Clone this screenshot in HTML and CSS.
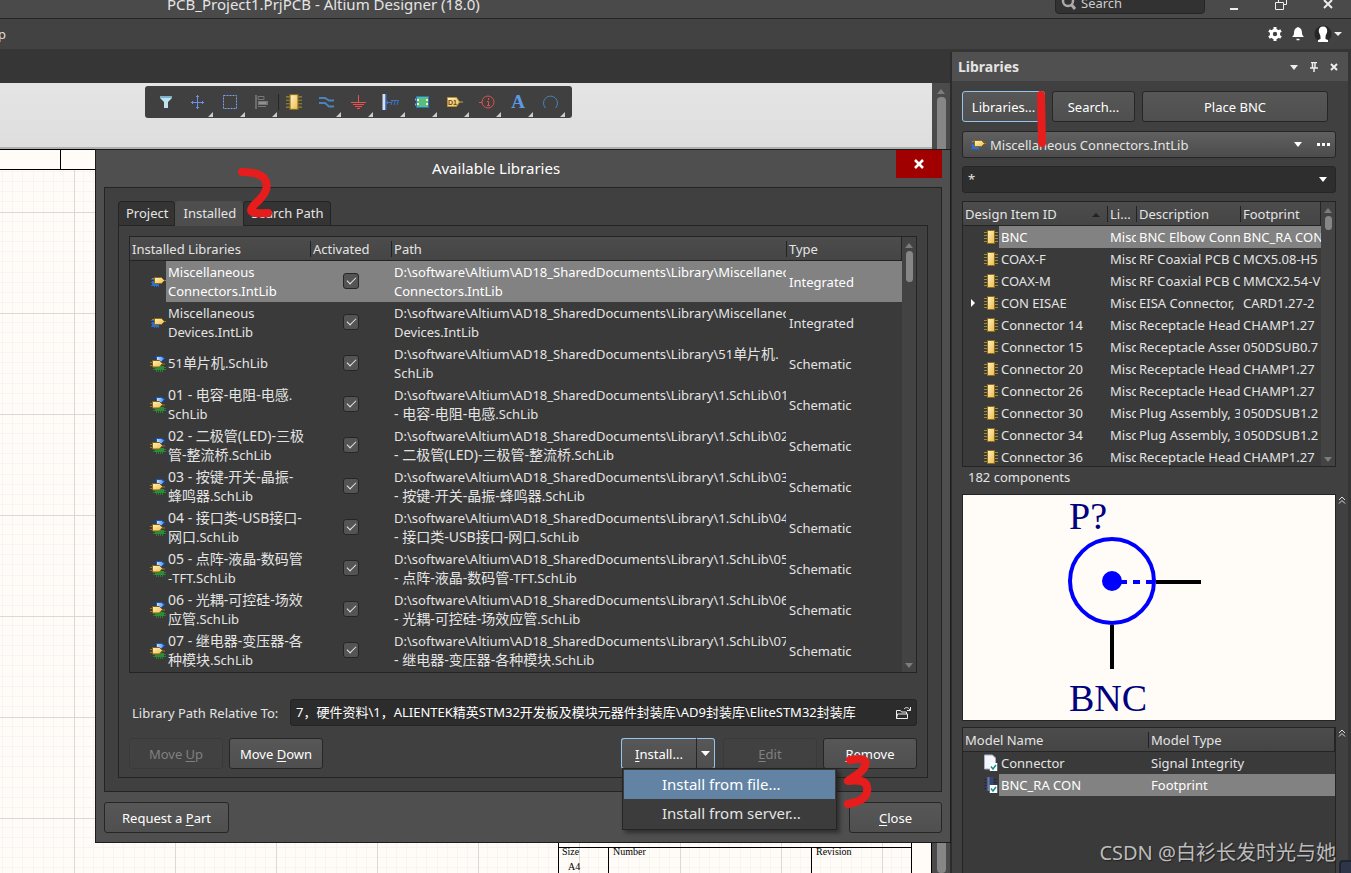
FILE: index.html
```
<!DOCTYPE html>
<html lang="en">
<head>
    <meta charset="UTF-8">
    <meta name="viewport" content="width=device-width, initial-scale=1.0">
    <title>PCB_Project1.PrjPCB - Altium Designer (18.0)</title>
    <link rel="stylesheet" href="styles.css">
</head>
<body>
    <svg class="defs" aria-hidden="true">
        <linearGradient id="gold" x1="0" y1="0" x2="1" y2="1">
            <stop offset="0" stop-color="#fff3c4"/><stop offset="1" stop-color="#eebb4c"/>
        </linearGradient>
        <linearGradient id="sky" x1="0" y1="0" x2="1" y2="0">
            <stop offset="0" stop-color="#cfe4ff"/><stop offset="1" stop-color="#3d86ea"/>
        </linearGradient>
        <symbol id="chip" viewBox="0 0 14 14">
            <path d="M0 2.500h14M0 5.500h14M0 8.500h14M0 11.500h14" stroke="#a08a35"/>
            <rect x="3.500" y=".5" width="7" height="13" fill="url(#gold)" stroke="#8c6d1c"/>
        </symbol>
        <symbol id="intlib" viewBox="0 0 16 12">
            <path d="M1 3.500h5M1 6.500h5M1 9.500h6M4.500 5v6M6.500 5v6M8.500 5v6" stroke="#2c62c0"/>
            <rect x="2" y="5" width="7" height="5" fill="#2f6cd0"/>
            <path d="M2 2.500h3M14 4.500h2" stroke="#a8811c"/>
            <path d="M4.500 1.500h7l3 3-3 3h-7z" fill="url(#gold)" stroke="#8c6a14"/>
        </symbol>
        <symbol id="schlib" viewBox="0 0 16 18">
            <path d="M2 2.500h13M3 5.500h13" stroke="#123f9a"/>
            <path d="M6.500 1.500h5l3 2-3 3h-5z" fill="url(#sky)" stroke="#1d57b4"/>
            <path d="M3 12.500h13M3 14.500h13M6.500 11v6M8.500 11v6M10.500 11v6M12.500 11v6" stroke="#2f7d35"/>
            <rect x="5" y="11" width="9" height="4" fill="#2c8c38"/>
            <path d="M0 7.500h4M0 10.500h4M12 9h3" stroke="#9a7615"/>
            <path d="M2.500 5.500h7l3 3-3 3.500h-7z" fill="url(#gold)" stroke="#80600e"/>
        </symbol>
        <symbol id="collapse" viewBox="0 0 8 8">
            <path d="M1 4l3-3 3 3M1 7.500l3-3 3 3" fill="none" stroke="#ddd"/>
        </symbol>
        <symbol id="ticked" viewBox="0 0 8 8">
            <path fill="#fff" d="M0 0h8v8H0z"/>
            <path d="M1.500 3.500l2 2.500 3-4" fill="none" stroke="#11908d" stroke-width="1.500"/>
        </symbol>
    </svg>

    <header class="titlebar">
        <span class="app-title">PCB_Project1.PrjPCB - Altium Designer (18.0)</span>
        <label class="app-search">
            <svg width="16" height="16" viewBox="0 0 16 16"><circle cx="7" cy="6" r="5" fill="none" stroke="#aaa" stroke-width="2.500"/><path d="M10 9l4 5" stroke="#aaa" stroke-width="3"/></svg>
            <input type="text" placeholder="Search" aria-label="Search">
        </label>
        <div class="window-buttons">
            <button aria-label="Minimize"><svg width="14" height="14" viewBox="0 0 14 14"><path d="M3 12h8" stroke="#eee" stroke-width="2"/></svg></button>
            <button aria-label="Restore"><svg width="14" height="14" viewBox="0 0 14 14"><path d="M1.500 5.500h8v7h-8zM4.500 5V2.500h8v5H10" fill="none" stroke="#eee"/></svg></button>
            <button aria-label="Close window"><svg width="14" height="14" viewBox="0 0 14 14"><path d="M3 3l8 8M11 3l-8 8" stroke="#eee" stroke-width="2"/></svg></button>
        </div>
    </header>

    <nav class="menubar">
        <a class="menu-help" href="#">Help</a>
        <div class="account">
            <svg width="14" height="14" viewBox="0 0 14 14"><circle cx="7" cy="7" r="3.700" fill="none" stroke="#fff" stroke-width="3"/><path d="M7 0v3M7 11v3M1 3.500l2.500 1.500M13 3.500L10.500 5M1 10.500L3.500 9M13 10.500L10.500 9" stroke="#fff" stroke-width="3"/></svg>
            <svg width="12" height="14" viewBox="0 0 12 14"><path d="M6 0c3 1 4 3 4 6 0 2 1 3 2 4H0c1-1 2-2 2-4 0-3 1-5 4-6z" fill="#fff"/><path d="M4.500 12.500h3" stroke="#fff" stroke-width="1.500"/></svg>
            <svg width="28" height="18" viewBox="0 0 28 18"><circle cx="9" cy="9" r="8.500" fill="#262626"/><path d="M9 1.500c3 0 4.500 2 4.200 5-.3 2-1.700 3.500-1.700 5.500v2l2.500 1v2H4v-2l2.500-1v-2c0-2-1.400-3.500-1.700-5.500-.3-3 1.200-5 4.200-5z" fill="#fff"/><path d="M20 7h8l-4 4z" fill="#eee"/></svg>
        </div>
    </nav>

    <div class="workspace">
        <main class="editor">
            <div class="doc-tabs"></div>
            <div class="doc">
                <div class="doc-view">
                    <div class="desk"></div>
                    <svg class="sheet">
                        <defs>
                            <pattern id="grid" x="73" y="62" width="101" height="101" patternUnits="userSpaceOnUse">
                                <path d="M10.500 0v101M20.500 0v101M30.500 0v101M40.500 0v101M50.500 0v101M61.500 0v101M71.500 0v101M81.500 0v101M91.500 0v101M0 10.500h101M0 20.500h101M0 30.500h101M0 40.500h101M0 50.500h101M0 61.500h101M0 71.500h101M0 81.500h101M0 91.500h101" stroke="#f6f5f1"/>
                                <path d="M1.500 0v101M0 1.500h101" stroke="#d9dad5"/>
                            </pattern>
                        </defs>
                        <rect width="100%" height="100%" fill="#fffcf7"/>
                        <rect y="20" width="911" height="100%" fill="url(#grid)"/>
                        <path d="M0 .5h932M60.500 0v20M0 20.500h911M911.500 20v900M931.500 0v900" stroke="#000"/>
                        <path d="M558.500 680v200M558 698.500h353M608.500 698v200M811.500 698v200" stroke="#000"/>
                        <text x="562" y="706">Size</text>
                        <text x="568" y="721">A4</text>
                        <text x="613" y="706">Number</text>
                        <text x="816" y="706">Revision</text>
                    </svg>
                </div>
                <div class="scrollbar doc-scroll"><i class="up"></i><i class="thumb"></i></div>
            </div>
            <div class="toolbar">
                <button aria-label="Filter"><svg width="16" height="16" viewBox="0 0 16 16"><path d="M2 2h12v2l-4 4v6H6V8L2 4z" fill="#bfe3ee"/><path d="M2 2h12v2H2z" fill="#78b4cc"/></svg></button>
                <button class="more" aria-label="Move"><svg width="16" height="16" viewBox="0 0 16 16"><path d="M7.500 1v14M1 8.500h13M6 2.500h3M6 13.500h3M2.500 7v3M12.500 7v3" stroke="#6a8fe6" fill="none"/></svg></button>
                <button class="more" aria-label="Select"><svg width="16" height="16" viewBox="0 0 16 16"><rect x="1.500" y="1.500" width="13" height="13" fill="none" stroke="#7ba0f5" stroke-dasharray="2 1"/></svg></button>
                <button class="more" aria-label="Align"><svg width="16" height="16" viewBox="0 0 16 16"><path d="M2 1v14" stroke="#6c6c6c" stroke-width="2"/><path d="M4 2.500h6v3H4zM4 12.500h8" stroke="#777" fill="none"/><path d="M4 7h10v4H4z" fill="#777"/><path d="M5 9h7" stroke="#aaa"/></svg></button>
                <button class="split" aria-label="Part"><svg width="16" height="16"><use href="#chip"/></svg></button>
                <button class="more" aria-label="Wire"><svg width="18" height="16" viewBox="0 0 18 16"><path d="M2 4h6l4 2.500h5M2 9h6l4 3.500h5" fill="none" stroke="#4a83bd" stroke-width="2"/></svg></button>
                <button class="more" aria-label="Power port"><svg width="16" height="16" viewBox="0 0 16 16"><path d="M8.500 1v8M1 8.500h15M3 10.500h11M5 12.500h7M7 14.500h3" stroke="#f0504c"/></svg></button>
                <button class="more" aria-label="Bus"><svg width="18" height="16" viewBox="0 0 18 16"><path d="M3 0v16" stroke="#cfe0ff" stroke-width="3"/><path d="M5 0v16M5 8.500h5M6.500 7v3" stroke="#3c72cc"/><path d="M10 11l1.500-5M13 11l1.500-5M16 11l1.500-5M10 6.500h8" stroke="#3c72cc"/></svg></button>
                <button class="more" aria-label="Sheet symbol"><svg width="16" height="16" viewBox="0 0 16 16"><path d="M1 5.500h14M1 10.500h14" stroke="#7ca8ff" stroke-width="2"/><rect x="2.500" y="2.500" width="12" height="11" fill="#58bd80" stroke="#2c70ca"/><path d="M3 5h2v2H3zM12 5h2v2h-2zM3 9h2v2H3zM12 9h2v2h-2z" fill="#fff39a"/></svg></button>
                <button class="more" aria-label="Net label"><svg width="18" height="16" viewBox="0 0 18 16"><path d="M2.500 3.500h9l3 4.500-3 4.500h-9z" fill="url(#gold)" stroke="#b8903a"/><path d="M14 8h4" stroke="#c9a24a"/><text class="tag-text" x="3" y="11">D1</text></svg></button>
                <button class="more" aria-label="No ERC"><svg width="18" height="16" viewBox="0 0 18 16"><circle cx="11" cy="8" r="6" fill="none" stroke="#e0504e"/><path d="M2 8.500h3M11.500 4v2M10 7.500h1.500V11M10 11.500h3" fill="none" stroke="#e0504e"/></svg></button>
                <button class="more letter" aria-label="Text">A</button>
                <button class="more" aria-label="Arc"><svg width="16" height="16" viewBox="0 0 16 16"><path d="M3.500 14A7 7 0 1 1 13.500 14" fill="none" stroke="#4682b8"/></svg></button>
            </div>
        </main>

        <aside class="panel">
            <div class="panel-head">
                <h2>Libraries</h2>
                <button aria-label="Panel menu"><svg width="8" height="8" viewBox="0 0 8 8"><path d="M0 2h8L4 7z" fill="#eee"/></svg></button>
                <button aria-label="Pin"><svg width="8" height="10" viewBox="0 0 8 10"><path d="M1 .5h6M2.500 1v5M5 1v5M0 6h8M4 6v4" stroke="#eee" stroke-width="1.500"/></svg></button>
                <button aria-label="Close panel"><svg width="8" height="8" viewBox="0 0 8 8"><path d="M1 1l6 6M7 1L1 7" stroke="#eee" stroke-width="2"/></svg></button>
            </div>
            <div class="panel-body">
                <div class="panel-buttons">
                    <button class="btn focused">Libraries...</button>
                    <button class="btn">Search...</button>
                    <button class="btn">Place BNC</button>
                </div>
                <div class="combo combo-lib">
                    <svg width="16" height="12"><use href="#intlib"/></svg>
                    <select aria-label="Library"><option>Miscellaneous Connectors.IntLib</option></select>
                    <svg width="8" height="5" viewBox="0 0 8 5"><path d="M0 0h8L4 5z" fill="#fff"/></svg>
                    <button aria-label="More options"><svg width="14" height="4" viewBox="0 0 14 4"><path d="M1 0h3v3H1zM6 0h3v3H6zM11 0h3v3h-3z" fill="#fff"/></svg></button>
                </div>
                <div class="combo combo-filter">
                    <input type="text" value="*" aria-label="Filter components">
                    <button aria-label="Filter history"><svg width="8" height="5" viewBox="0 0 8 5"><path d="M0 0h8L4 5z" fill="#fff"/></svg></button>
                </div>
                <div class="grid components">
                    <table>
                        <colgroup><col class="c-icon"><col class="c-id"><col class="c-lib"><col class="c-desc"><col></colgroup>
                        <thead>
                            <tr><th colspan="2"><span class="sorted">Design Item ID</span></th><th>Li...</th><th>Description</th><th>Footprint</th></tr>
                        </thead>
                        <tbody>
                            <tr class="selected"><td><svg class="chip"><use href="#chip"/></svg></td><td>BNC</td><td>Misc</td><td>BNC Elbow Conn</td><td>BNC_RA CON</td></tr>
                            <tr><td><svg class="chip"><use href="#chip"/></svg></td><td>COAX-F</td><td>Misc</td><td>RF Coaxial PCB C</td><td>MCX5.08-H5</td></tr>
                            <tr><td><svg class="chip"><use href="#chip"/></svg></td><td>COAX-M</td><td>Misc</td><td>RF Coaxial PCB C</td><td>MMCX2.54-V</td></tr>
                            <tr><td class="expand"><svg class="chip"><use href="#chip"/></svg></td><td>CON EISAE</td><td>Misc</td><td>EISA Connector,</td><td>CARD1.27-2</td></tr>
                            <tr><td><svg class="chip"><use href="#chip"/></svg></td><td>Connector 14</td><td>Misc</td><td>Receptacle Head</td><td>CHAMP1.27</td></tr>
                            <tr><td><svg class="chip"><use href="#chip"/></svg></td><td>Connector 15</td><td>Misc</td><td>Receptacle Assem</td><td>050DSUB0.7</td></tr>
                            <tr><td><svg class="chip"><use href="#chip"/></svg></td><td>Connector 20</td><td>Misc</td><td>Receptacle Head</td><td>CHAMP1.27</td></tr>
                            <tr><td><svg class="chip"><use href="#chip"/></svg></td><td>Connector 26</td><td>Misc</td><td>Receptacle Head</td><td>CHAMP1.27</td></tr>
                            <tr><td><svg class="chip"><use href="#chip"/></svg></td><td>Connector 30</td><td>Misc</td><td>Plug Assembly, 3</td><td>050DSUB1.2</td></tr>
                            <tr><td><svg class="chip"><use href="#chip"/></svg></td><td>Connector 34</td><td>Misc</td><td>Plug Assembly, 3</td><td>050DSUB1.2</td></tr>
                            <tr><td><svg class="chip"><use href="#chip"/></svg></td><td>Connector 36</td><td>Misc</td><td>Receptacle Head</td><td>CHAMP1.27</td></tr>
                        </tbody>
                    </table>
                    <div class="scrollbar"><i class="up"></i><i class="thumb short"></i><i class="down"></i></div>
                </div>
                <p class="count">182 components</p>
                <div class="with-collapse">
                    <div class="preview">
                        <svg width="240" height="224" viewBox="0 0 240 224">
                            <text x="106" y="34">P?</text>
                            <circle cx="149" cy="86" r="42" fill="none" stroke="#00f" stroke-width="4"/>
                            <circle cx="149" cy="86" r="10" fill="#00f"/>
                            <path d="M158 87h6M170 87h7M183 87h8" stroke="#00f" stroke-width="4"/>
                            <path d="M193 87h45M149 130v44" stroke="#000" stroke-width="4"/>
                            <text x="106" y="216">BNC</text>
                        </svg>
                    </div>
                    <svg class="collapse"><use href="#collapse"/></svg>
                </div>
                <div class="with-collapse fill">
                    <div class="grid models">
                        <table>
                            <colgroup><col class="c-icon"><col class="c-model"><col></colgroup>
                            <thead><tr><th colspan="2">Model Name</th><th>Model Type</th></tr></thead>
                            <tbody>
                                <tr><td><svg class="model-icon" viewBox="0 0 14 18"><path d="M1 1h8l3 3v11H1z" fill="#f3f5ff" stroke="#a9aec8"/><use href="#ticked" x="6" y="9" width="8" height="8"/></svg></td><td>Connector</td><td>Signal Integrity</td></tr>
                                <tr class="selected"><td><svg class="model-icon" viewBox="0 0 14 18"><path d="M1 3.500h12M1 6.500h12M1 9.500h12M1 12.500h12" stroke="#22283c"/><path d="M3 1h7v14H3z" fill="#37446f"/><path d="M4 1h2v14H4z" fill="#6878a8"/><use href="#ticked" x="6" y="9" width="8" height="8"/></svg></td><td>BNC_RA CON</td><td>Footprint</td></tr>
                            </tbody>
                        </table>
                    </div>
                    <svg class="collapse"><use href="#collapse"/></svg>
                </div>
            </div>
        </aside>
    </div>

    <section class="dialog" role="dialog" aria-labelledby="dialogTitle">
        <div class="dialog-head">
            <h1 id="dialogTitle">Available Libraries</h1>
            <button class="dialog-close" aria-label="Close dialog"><svg width="10" height="10" viewBox="0 0 10 10"><path d="M1 1l8 8M9 1L1 9" stroke="#fff" stroke-width="2.500"/></svg></button>
        </div>
        <div class="dialog-box">
            <div class="tabs">
                <button class="tab">Project</button>
                <button class="tab active">Installed</button>
                <button class="tab">Search Path</button>
            </div>
            <div class="tab-page">
                <div class="grid installed">
                    <table>
                        <colgroup><col class="c-icon"><col class="c-name"><col class="c-active"><col class="c-path"><col></colgroup>
                        <thead>
                            <tr><th colspan="2">Installed Libraries</th><th>Activated</th><th>Path</th><th>Type</th></tr>
                        </thead>
                        <tbody>
                            <tr class="selected">
                                <td><svg class="int"><use href="#intlib"/></svg></td>
                                <td>Miscellaneous<br>Connectors.IntLib</td>
                                <td><input type="checkbox" checked aria-label="Activated"></td>
                                <td>D:\software\Altium\AD18_SharedDocuments\Library\Miscellaneo<br>Connectors.IntLib</td>
                                <td>Integrated</td>
                            </tr>
                            <tr>
                                <td><svg class="int"><use href="#intlib"/></svg></td>
                                <td>Miscellaneous<br>Devices.IntLib</td>
                                <td><input type="checkbox" checked aria-label="Activated"></td>
                                <td>D:\software\Altium\AD18_SharedDocuments\Library\Miscellaneo<br>Devices.IntLib</td>
                                <td>Integrated</td>
                            </tr>
                            <tr>
                                <td><svg class="sch"><use href="#schlib"/></svg></td>
                                <td>51<span class="zh">单片机</span>.SchLib</td>
                                <td><input type="checkbox" checked aria-label="Activated"></td>
                                <td>D:\software\Altium\AD18_SharedDocuments\Library\51<span class="zh">单片机</span>.<br>SchLib</td>
                                <td>Schematic</td>
                            </tr>
                            <tr>
                                <td><svg class="sch"><use href="#schlib"/></svg></td>
                                <td><span class="zh">01 - 电容-电阻-电感</span>.<br>SchLib</td>
                                <td><input type="checkbox" checked aria-label="Activated"></td>
                                <td>D:\software\Altium\AD18_SharedDocuments\Library\1.SchLib\01<br><span class="zh">- 电容-电阻-电感</span>.SchLib</td>
                                <td>Schematic</td>
                            </tr>
                            <tr>
                                <td><svg class="sch"><use href="#schlib"/></svg></td>
                                <td><span class="zh">02 - 二极管(LED)-三极<br>管-整流桥</span>.SchLib</td>
                                <td><input type="checkbox" checked aria-label="Activated"></td>
                                <td>D:\software\Altium\AD18_SharedDocuments\Library\1.SchLib\02<br><span class="zh">- 二极管(LED)-三极管-整流桥</span>.SchLib</td>
                                <td>Schematic</td>
                            </tr>
                            <tr>
                                <td><svg class="sch"><use href="#schlib"/></svg></td>
                                <td><span class="zh">03 - 按键-开关-晶振-<br>蜂鸣器</span>.SchLib</td>
                                <td><input type="checkbox" checked aria-label="Activated"></td>
                                <td>D:\software\Altium\AD18_SharedDocuments\Library\1.SchLib\03<br><span class="zh">- 按键-开关-晶振-蜂鸣器</span>.SchLib</td>
                                <td>Schematic</td>
                            </tr>
                            <tr>
                                <td><svg class="sch"><use href="#schlib"/></svg></td>
                                <td><span class="zh">04 - 接口类-USB接口-<br>网口</span>.SchLib</td>
                                <td><input type="checkbox" checked aria-label="Activated"></td>
                                <td>D:\software\Altium\AD18_SharedDocuments\Library\1.SchLib\04<br><span class="zh">- 接口类-USB接口-网口</span>.SchLib</td>
                                <td>Schematic</td>
                            </tr>
                            <tr>
                                <td><svg class="sch"><use href="#schlib"/></svg></td>
                                <td><span class="zh">05 - 点阵-液晶-数码管</span><br>-TFT.SchLib</td>
                                <td><input type="checkbox" checked aria-label="Activated"></td>
                                <td>D:\software\Altium\AD18_SharedDocuments\Library\1.SchLib\05<br><span class="zh">- 点阵-液晶-数码管</span>-TFT.SchLib</td>
                                <td>Schematic</td>
                            </tr>
                            <tr>
                                <td><svg class="sch"><use href="#schlib"/></svg></td>
                                <td><span class="zh">06 - 光耦-可控硅-场效<br>应管</span>.SchLib</td>
                                <td><input type="checkbox" checked aria-label="Activated"></td>
                                <td>D:\software\Altium\AD18_SharedDocuments\Library\1.SchLib\06<br><span class="zh">- 光耦-可控硅-场效应管</span>.SchLib</td>
                                <td>Schematic</td>
                            </tr>
                            <tr>
                                <td><svg class="sch"><use href="#schlib"/></svg></td>
                                <td><span class="zh">07 - 继电器-变压器-各<br>种模块</span>.SchLib</td>
                                <td><input type="checkbox" checked aria-label="Activated"></td>
                                <td>D:\software\Altium\AD18_SharedDocuments\Library\1.SchLib\07<br><span class="zh">- 继电器-变压器-各种模块</span>.SchLib</td>
                                <td>Schematic</td>
                            </tr>
                        </tbody>
                    </table>
                    <div class="scrollbar"><i class="up"></i><i class="thumb long"></i><i class="down"></i></div>
                </div>
                <div class="path-row">
                    <label for="libPath">Library Path Relative To:</label>
                    <div class="path-field">
                        <input type="text" id="libPath" value="7，硬件资料\1，ALIENTEK精英STM32开发板及模块元器件封装库\AD9封装库\EliteSTM32封装库">
                        <button aria-label="Browse"><svg width="18" height="14" viewBox="0 0 18 14"><path d="M1.500 12.500v-8h4l1 1.500h5v2M1.500 12.500l1-4.500h10v4.500zM9 3c2-2 4-2 6 1M15.500 1v3.500H12" fill="none" stroke="#eee"/></svg></button>
                    </div>
                </div>
                <div class="button-row">
                    <button class="btn" disabled>Move <u>U</u>p</button>
                    <button class="btn">Move <u>D</u>own</button>
                    <div class="install">
                        <button class="btn focused"><u>I</u>nstall...</button>
                        <button class="btn focused drop" aria-label="Install options"><svg width="9" height="5" viewBox="0 0 9 5"><path d="M0 0h9L4.500 5z" fill="#fff"/></svg></button>
                        <div class="install-menu">
                            <button class="hover">Install from file...</button>
                            <button>Install from server...</button>
                        </div>
                    </div>
                    <button class="btn" disabled><u>E</u>dit</button>
                    <button class="btn"><u>R</u>emove</button>
                </div>
            </div>
        </div>
        <div class="dialog-foot">
            <button class="btn request">Request a <u>P</u>art</button>
            <button class="btn"><u>C</u>lose</button>
        </div>
    </section>

    <svg class="marks" aria-hidden="true">
        <path d="M1041 95L1042 143"/>
        <path d="M242 172C252 172 259 173 264 178C271 188 263 197 254 205C248 212 251 214 268 213"/>
        <path d="M850 760C860 758 868 758 865 766C862 774 850 778 848 781C858 780 866 780 867 787C869 797 860 802 848 804"/>
    </svg>
    <div class="watermark">CSDN @白衫长发时光与她</div>
    <div class="corner"></div>
</body>
</html>
```
FILE: styles.css
```
* {
    box-sizing: border-box;
}
body {
    margin: 0;
    height: 100vh;
    overflow: hidden;
    display: flex;
    flex-direction: column;
    position: relative;
    background: #353535;
    color: #e4e4e4;
    font-family: "Noto Sans", "Noto Sans CJK SC", sans-serif;
    font-size: 13px;
    line-height: 19px;
}
button, input, select {
    font: inherit;
    color: inherit;
    margin: 0;
    padding: 0;
    border: none;
    background: none;
    outline: none;
}
svg {
    display: block;
    flex: none;
}
.defs {
    position: absolute;
    width: 0;
    height: 0;
}
.zh {
    font-size: 14px;
    line-height: 18px;
}

/* window bars */
.titlebar {
    display: flex;
    align-items: flex-end;
    height: 19px;
    flex: none;
    overflow: hidden;
    background: #4a4a4a;
    border-bottom: 1px solid #262626;
}
.app-title {
    padding-left: 167px;
    padding-bottom: 4px;
    flex: 1;
    font-size: 15px;
}
.app-search {
    display: flex;
    align-items: center;
    gap: 4px;
    width: 150px;
    height: 22px;
    margin-bottom: 4px;
    padding: 0 5px;
    background: #323232;
    border: 1px solid #262626;
    border-radius: 4px;
}
.app-search input {
    width: 100%;
}
.app-search input::placeholder {
    color: #ccc;
}
.window-buttons {
    display: flex;
    gap: 33px;
    padding: 0 16px 7px 22px;
}
.menubar {
    display: flex;
    justify-content: space-between;
    align-items: center;
    height: 30px;
    flex: none;
    background: #424242;
}
.menu-help {
    width: 6px;
    display: flex;
    justify-content: flex-end;
    overflow: hidden;
    color: #ddd;
    text-decoration: none;
}
.account {
    display: flex;
    align-items: center;
    gap: 10px;
    padding-right: 9px;
}
.workspace {
    display: flex;
    flex: 1;
    min-height: 0;
}

/* schematic editor */
.editor {
    flex: 1;
    display: flex;
    flex-direction: column;
    position: relative;
    min-width: 0;
}
.doc-tabs {
    height: 34px;
    flex: none;
    background: #363636;
}
.doc {
    flex: 1;
    display: flex;
    min-height: 0;
}
.doc-view {
    flex: 1;
    display: flex;
    flex-direction: column;
    min-width: 0;
}
.desk {
    height: 66px;
    flex: none;
    background: linear-gradient(#e5e5e5, #dedede);
    border-bottom: 2px solid #b0b0b0;
}
.sheet {
    width: 100%;
    flex: 1;
    min-height: 0;
    font: 10px "Liberation Serif", serif;
}
.toolbar {
    position: absolute;
    left: 145px;
    top: 37px;
    display: flex;
    padding: 0 6px 0 5px;
    background: #404040;
    border-radius: 3px;
}
.toolbar button {
    width: 32px;
    height: 32px;
    display: flex;
    align-items: center;
    justify-content: center;
    position: relative;
}
.toolbar .more::after {
    content: "";
    position: absolute;
    right: 1px;
    bottom: 1px;
    border: solid transparent;
    border-width: 0 0 5px 5px;
    border-bottom-color: #ccc;
}
.toolbar .split {
    background: linear-gradient(#262626, #262626) no-repeat 0 8px / 1px 16px;
}
.toolbar .letter {
    font: bold 19px "Liberation Serif", serif;
    color: #5a9ae6;
}
.tag-text {
    font: bold 7px "Liberation Sans", sans-serif;
    fill: #6b4a08;
}

/* scrollbars */
.scrollbar {
    display: flex;
    flex-direction: column;
    align-items: center;
    width: 14px;
    flex: none;
    padding: 6px 0 4px;
    gap: 3px;
    background: #434343;
}
.scrollbar .up {
    border: 4px solid transparent;
    border-top: 0;
    border-bottom: 5px solid #7c7c7c;
}
.scrollbar .down {
    margin-top: auto;
    border: 4px solid transparent;
    border-bottom: 0;
    border-top: 5px solid #7c7c7c;
}
.thumb {
    width: 7px;
    flex: 1;
    background: #868686;
    border-radius: 4px;
}
.thumb.short {
    flex: none;
    height: 14px;
}
.thumb.long {
    flex: none;
    height: 31px;
}
.doc-scroll {
    width: 18px;
    padding-bottom: 0;
    background: #4b4b4b;
}
.doc-scroll .thumb {
    width: 9px;
}

/* grids */
.grid {
    display: flex;
    background: #3a3a3a;
    border: 1px solid #242424;
    overflow: hidden;
}
.grid table {
    flex: 1;
    width: 0;
    table-layout: fixed;
    border-collapse: separate;
    border-spacing: 0;
    align-self: flex-start;
}
.grid th {
    height: 24px;
    padding: 2px 0 0 3px;
    text-align: left;
    font-weight: normal;
    white-space: nowrap;
    overflow: hidden;
    border-bottom: 1px solid #242424;
    background: linear-gradient(#222, #222) no-repeat 0 4px / 1px 16px, linear-gradient(#4c4c4c, #454545);
}
.grid th:first-child {
    padding-left: 2px;
    background: linear-gradient(#4c4c4c, #454545);
}
.grid th:last-child {
    border-right: 1px solid #242424;
}
.grid td {
    padding: 0 0 0 3px;
    white-space: nowrap;
    overflow: hidden;
    vertical-align: middle;
}
.grid td:first-child {
    padding-left: 20px;
}
.grid td:nth-child(2) {
    padding-left: 2px;
}
.selected td:not(:first-child) {
    background: #828282;
    color: #fff;
}
.c-icon {
    width: 36px;
}

/* buttons */
.btn {
    height: 31px;
    display: flex;
    align-items: center;
    justify-content: center;
    padding-top: 2px;
    white-space: pre;
    color: #fff;
    background: linear-gradient(#575757, #4f4f4f);
    border: 1px solid #262626;
    border-radius: 3px;
}
.btn:disabled {
    color: #808080;
    background: #414141;
    border-color: #3a3a3a;
}
.btn.focused {
    border-color: #97c4ee;
}
u {
    text-underline-offset: 2px;
}

/* libraries panel */
.panel {
    width: 401px;
    flex: none;
    margin-top: 3px;
    display: flex;
    flex-direction: column;
    border-left: 2px solid #2c2c2c;
    border-right: 3px solid #353535;
    background: #404040;
}
.panel-head {
    display: flex;
    align-items: center;
    gap: 12px;
    height: 29px;
    padding: 0 10px 0 6px;
    background: #505050;
}
.panel-head h2 {
    flex: 1;
    margin: 0;
    font-size: 14px;
}
.panel-body {
    flex: 1;
    display: flex;
    flex-direction: column;
    min-height: 0;
    padding: 10px 2px 0 10px;
}
.panel-buttons {
    display: flex;
    gap: 7px;
    padding-right: 18px;
}
.panel-buttons .btn {
    width: 83px;
}
.panel-buttons .btn:last-child {
    flex: 1;
}
.combo {
    display: flex;
    align-items: center;
    height: 27px;
    margin: 9px 10px 0 0;
    padding: 0 5px 0 7px;
    border: 1px solid #262626;
    border-radius: 3px;
}
.combo-lib {
    gap: 4px;
    background: linear-gradient(#606060, #4c4c4c);
}
.combo select {
    flex: 1;
    appearance: none;
    padding-top: 2px;
}
.combo-lib button {
    margin-left: 10px;
}
.combo-filter {
    margin-top: 8px;
    padding: 0 8px 0 5px;
    background: #2e2e2e;
}
.combo-filter input {
    flex: 1;
}
.components {
    height: 266px;
    margin: 8px 10px 0 0;
}
.components td, .models td {
    height: 22px;
}
.chip {
    width: 16px;
    height: 14px;
}
.expand {
    position: relative;
}
.expand::before {
    content: "";
    position: absolute;
    left: 8px;
    top: 7px;
    border: 4px solid transparent;
    border-left-color: #fff;
    border-right: 0;
}
.sorted {
    display: flex;
    align-items: center;
    justify-content: space-between;
    padding-right: 7px;
}
.sorted::after {
    content: "";
    border: 4px solid transparent;
    border-top: 0;
    border-bottom-color: #222;
}
.c-id {
    width: 108px;
}
.c-lib {
    width: 29px;
}
.c-desc {
    width: 104px;
}
.count {
    margin: 1px 0 7px 6px;
}
.with-collapse {
    display: flex;
    gap: 2px;
    margin-bottom: 6px;
}
.with-collapse.fill {
    flex: 1;
    margin-bottom: 0;
    min-height: 0;
}
.with-collapse > div {
    flex: 1;
}
.collapse {
    width: 8px;
    height: 8px;
    margin-top: 2px;
}
.preview {
    height: 227px;
    background: #fffcf7;
    border: 1px solid #242424;
}
.preview text {
    font-family: "Liberation Serif", serif;
    font-size: 38px;
    fill: #000080;
}
.models {
    border-bottom: 0;
}
.c-model {
    width: 149px;
}
.model-icon {
    width: 15px;
    height: 18px;
}

/* available libraries dialog */
.dialog {
    position: absolute;
    left: 95px;
    top: 149px;
    width: 856px;
    padding: 0 8px 9px;
    background: #4f4f4f;
    border: 1px solid #1c1c1c;
}
.dialog-head {
    display: flex;
    height: 37px;
}
.dialog-head h1 {
    flex: 1;
    margin: 0 0 0 -8px;
    font-size: 15px;
    font-weight: normal;
    line-height: 37px;
    text-align: center;
    color: #fff;
}
.dialog-close {
    width: 46px;
    height: 28px;
    display: flex;
    align-items: center;
    justify-content: center;
    background: #a00000;
}
.dialog-box {
    padding: 13px;
    border: 1px solid #242424;
    background: #404040;
}
.tabs {
    display: flex;
}
.tab {
    height: 24px;
    padding: 0 6px 0 7px;
    background: #343434;
    border: 1px solid #242424;
    border-bottom: 0;
    border-radius: 4px 4px 0 0;
}
.tab.active {
    height: 25px;
    margin-bottom: -1px;
    padding-bottom: 2px;
    background: #4e4e4e;
    border-color: #4e4e4e;
    position: relative;
}
.tab-page {
    padding: 10px 10px 8px;
    border: 1px solid #242424;
}
.installed {
    height: 437px;
}
.installed td {
    height: 41px;
}
.installed tbody tr td:nth-child(3) {
    padding-left: 33px;
    padding-bottom: 2px;
}
.installed td:last-child {
    padding-top: 2px;
}
.c-name {
    width: 144px;
}
.c-active {
    width: 81px;
}
.c-path {
    width: 395px;
}
.int {
    width: 16px;
    height: 12px;
}
.sch {
    width: 16px;
    height: 18px;
}
.installed input {
    appearance: none;
    display: flex;
    justify-content: center;
    width: 16px;
    height: 16px;
    border: 1px solid #262626;
    border-radius: 3px;
    background: #545454;
}
.installed input:checked::after {
    content: "";
    width: 4px;
    height: 8px;
    margin-top: 1px;
    border: solid #e8e8e8;
    border-width: 0 1px 1px 0;
    transform: rotate(45deg);
}
.path-row {
    display: flex;
    align-items: center;
    justify-content: space-between;
    margin-top: 26px;
    padding-left: 3px;
}
.path-row label {
    padding-top: 2px;
}
.path-field {
    display: flex;
    align-items: center;
    gap: 2px;
    width: 627px;
    height: 27px;
    padding: 0 3px 0 5px;
    color: #fff;
    background: #2c2c2c;
    border: 1px solid #242424;
    border-radius: 3px;
}
.path-field input {
    flex: 1;
    min-width: 0;
}
.button-row {
    display: flex;
    gap: 6px;
    margin-top: 12px;
}
.button-row > .btn {
    width: 94px;
}
.install {
    display: flex;
    position: relative;
    width: 94px;
    margin-left: auto;
    margin-right: 2px;
}
.install .btn {
    flex: 1;
    border-right-color: #262626;
    border-radius: 3px 0 0 3px;
}
.install .drop {
    flex: 0 0 18px;
    padding-top: 0;
    border-left: 0;
    border-right-color: #97c4ee;
    border-radius: 0 3px 3px 0;
}
.install-menu {
    position: absolute;
    left: 1px;
    top: 30px;
    width: 215px;
    padding: 1px;
    background: #3c3c3c;
    border: 1px solid #242424;
    box-shadow: 3px 3px 4px rgba(0, 0, 0, 0.4);
}
.install-menu button {
    display: block;
    width: 100%;
    height: 29px;
    padding-left: 38px;
    text-align: left;
    font-size: 15px;
}
.install-menu .hover {
    background: #6283a3;
    color: #fff;
}
.dialog-foot {
    display: flex;
    justify-content: space-between;
    margin-top: 10px;
}
.dialog-foot .btn {
    width: 93px;
}
.dialog-foot .request {
    width: 125px;
}

/* pen marks and watermark lie over everything */
.marks {
    position: absolute;
    left: 0;
    top: 0;
    width: 100%;
    height: 100%;
    pointer-events: none;
    fill: none;
    stroke: #e71d1d;
    stroke-width: 8px;
    stroke-linecap: round;
    stroke-linejoin: round;
}
.watermark {
    position: absolute;
    right: 15px;
    bottom: 7px;
    font-size: 20px;
    line-height: 26px;
    color: #bcbcbc;
    text-shadow: 1px 1px 1px #222;
}
.corner {
    position: absolute;
    right: 0;
    bottom: 0;
    width: 12px;
    height: 13px;
    background: #2f3548;
    border: solid #1f2433;
    border-width: 2px 0 0 2px;
    border-radius: 4px 0 0 0;
}
```
